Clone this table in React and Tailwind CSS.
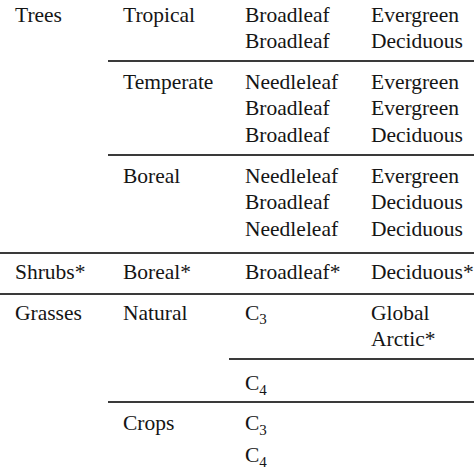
const serif = "font-['Liberation_Serif','Times_New_Roman',serif]";
const line = "border-t-2 border-[#3a3a3a]";

function Sub({ base, sub }) {
  return (
    <div className={serif}>
      {base}
      <span className={`relative top-[4.5px] text-[15px] ${serif}`}>{sub}</span>
    </div>
  );
}

function Cell({ className = "", children }) {
  return <div className={`${serif} ${className}`}>{children}</div>;
}

const treeGroups = [
  {
    name: "Tropical",
    rows: [
      ["Broadleaf", "Evergreen"],
      ["Broadleaf", "Deciduous"],
    ],
    pad: "pt-[1.5px] pb-[5.5px]",
  },
  {
    name: "Temperate",
    rows: [
      ["Needleleaf", "Evergreen"],
      ["Broadleaf", "Evergreen"],
      ["Broadleaf", "Deciduous"],
    ],
    pad: "pt-[6.5px] pb-[6px]",
  },
  {
    name: "Boreal",
    rows: [
      ["Needleleaf", "Evergreen"],
      ["Broadleaf", "Deciduous"],
      ["Needleleaf", "Deciduous"],
    ],
    pad: "pt-[6.5px] pb-[10px]",
  },
];

export default function App() {
  return (
    <div className={`w-[474px] h-[474px] overflow-hidden bg-white text-[#151515] text-[21.5px] leading-[26.5px] whitespace-nowrap ${serif}`}>
      {/* Trees */}
      <div className="flex">
        <Cell className="w-[108px] pl-[15px] pt-[1.5px]">Trees</Cell>
        <div className="flex-1 flex flex-col">
          {treeGroups.map((g, i) => (
            <div key={g.name} className={`flex ${g.pad} ${i > 0 ? line : ""}`}>
              <Cell className="w-[121px] pl-[15px]">{g.name}</Cell>
              <div className="w-[142px] pl-[16px]">
                {g.rows.map((r, j) => (
                  <Cell key={j}>{r[0]}</Cell>
                ))}
              </div>
              <div className="flex-1">
                {g.rows.map((r, j) => (
                  <Cell key={j}>{r[1]}</Cell>
                ))}
              </div>
            </div>
          ))}
        </div>
      </div>

      {/* Shrubs */}
      <div className={`flex pt-[4.5px] pb-[8px] ${line}`}>
        <Cell className="w-[108px] pl-[15px]">Shrubs*</Cell>
        <Cell className="w-[121px] pl-[15px]">Boreal*</Cell>
        <Cell className="w-[142px] pl-[16px]">Broadleaf*</Cell>
        <Cell className="flex-1">Deciduous*</Cell>
      </div>

      {/* Grasses */}
      <div className={`flex ${line} border-b-2 border-b-[#3a3a3a]`}>
        <Cell className="w-[108px] pl-[15px] pt-[4.5px]">Grasses</Cell>
        <div className="flex-1 flex flex-col">
          <div className="flex">
            <Cell className="w-[121px] pl-[15px] pt-[4.5px]">Natural</Cell>
            <div className="flex-1 flex flex-col">
              <div className="flex pt-[4.5px] pb-[5px]">
                <div className="w-[142px] pl-[16px]">
                  <Sub base="C" sub="3" />
                </div>
                <div className="flex-1">
                  <Cell>Global</Cell>
                  <Cell>Arctic*</Cell>
                </div>
              </div>
              <div className={`flex pt-[10.5px] pb-[2px] ${line}`}>
                <div className="w-[142px] pl-[16px]">
                  <Sub base="C" sub="4" />
                </div>
              </div>
            </div>
          </div>
          <div className={`flex pt-[7.5px] pb-[5px] ${line}`}>
            <Cell className="w-[121px] pl-[15px]">Crops</Cell>
            <div className="w-[142px] pl-[16px]">
              <Sub base="C" sub="3" />
              <div className="mt-[3.5px]">
                <Sub base="C" sub="4" />
              </div>
            </div>
          </div>
        </div>
      </div>
    </div>
  );
}
